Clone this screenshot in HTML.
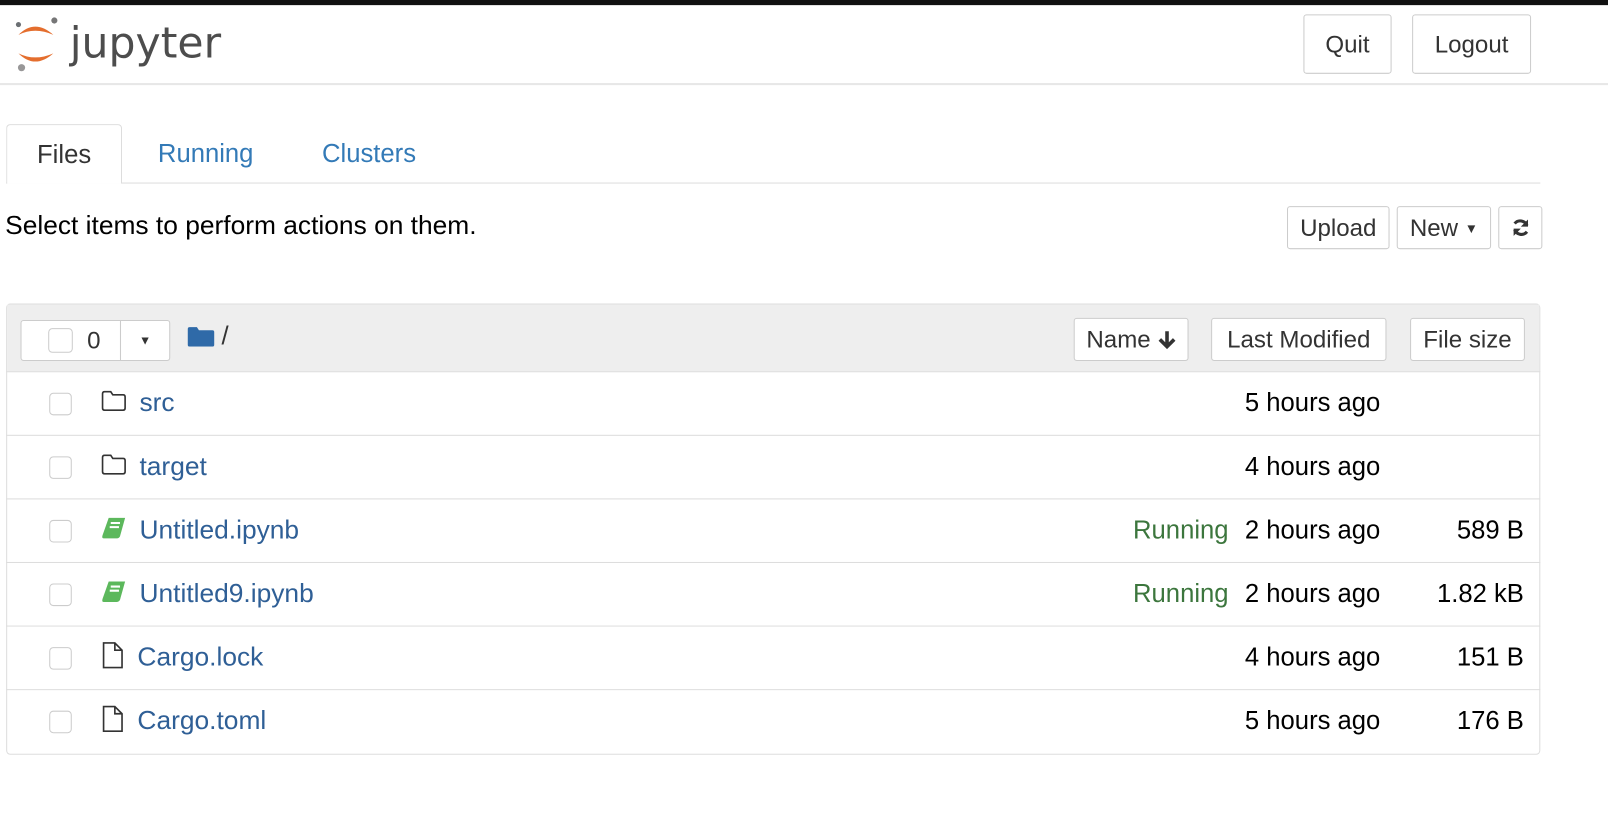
<!DOCTYPE html>
<html><head><style>
body{margin:0;width:1608px;height:830px;background:#fff;font-family:"Liberation Sans",Arial,sans-serif;position:relative;overflow:hidden;color:#000}
#w{position:absolute;left:0;top:0;width:1568px;height:810px;transform:scale(1.0255);transform-origin:0 0}
.a{position:absolute}
.btn{position:absolute;border:1px solid #ccc;border-radius:3px;background:#fff;font-size:23.5px;color:#333;display:flex;align-items:center;justify-content:center;box-sizing:border-box}
.row{position:absolute;left:6px;width:1496px;height:62px;border-top:1px solid #ddd;box-sizing:border-box}
.cb{position:absolute;left:42px;top:20px;width:22px;height:22px;border:1px solid #ccc;border-radius:4px;box-sizing:border-box;background:#fff}
.nm{position:absolute;left:130px;top:16px;font-size:25.7px;color:#2f5f96}
.ic{position:absolute;left:92px;top:17px}
.tm{position:absolute;right:156px;top:16px;font-size:25px;color:#000}
.sz{position:absolute;right:16px;top:16px;font-size:25px}
.run{position:absolute;right:304px;top:16px;font-size:25px;color:#3c763d}
</style></head><body><div id="w">
<div class="a" style="left:0;top:0;width:1608px;height:5px;background:#111"></div>
<svg class="a" style="left:12px;top:14px" width="50" height="56" viewBox="0 0 50 56">
<path d="M6 20 Q22 4 40 20 Q22 12 6 20Z" fill="#e46e2e"/>
<path d="M6 38 Q22 54 40 38 Q22 46 6 38Z" fill="#e46e2e"/>
<circle cx="6" cy="10" r="2.5" fill="#6b6f73"/><circle cx="41" cy="6" r="3" fill="#767677"/><circle cx="9" cy="52" r="3.5" fill="#989798"/>
</svg>
<div class="a" style="left:68px;top:17px;font-size:41.5px;color:#4d4d4d;font-family:'DejaVu Sans',sans-serif">jupyter</div>
<div class="btn" style="left:1271px;top:14px;width:86px;height:58px">Quit</div>
<div class="btn" style="left:1377px;top:14px;width:116px;height:58px">Logout</div>
<div class="a" style="left:0;top:81px;width:1608px;height:2px;background:#e7e7e7"></div>

<div class="a" style="left:6px;top:178px;width:1496px;height:1px;background:#ddd"></div>
<div class="a" style="left:6px;top:121px;width:113px;height:58px;border:1px solid #ddd;border-bottom:none;border-radius:4px 4px 0 0;background:#fff;box-sizing:border-box;font-size:25px;color:#333;text-align:center;line-height:58px">Files</div>
<div class="a" style="left:154px;top:136px;font-size:25px;color:#337ab7">Running</div>
<div class="a" style="left:314px;top:136px;font-size:25px;color:#337ab7">Clusters</div>

<div class="a" style="left:5px;top:206px;font-size:25.7px">Select items to perform actions on them.</div>
<div class="btn" style="left:1255px;top:201px;width:100px;height:42px">Upload</div>
<div class="btn" style="left:1362px;top:201px;width:92px;height:42px">New&nbsp;<span style="font-size:13px">▼</span></div>
<div class="btn" style="left:1461px;top:201px;width:43px;height:42px"><svg width="20" height="20" viewBox="0 0 20 20" fill="none" stroke="#333" stroke-width="3"><path d="M16 8A7 7 0 0 0 4 6"/><path d="M4 12a7 7 0 0 0 12 2"/><path d="M17 2v7h-7" fill="#333" stroke-width="0"/><path d="M3 18v-7h7" fill="#333" stroke-width="0"/></svg></div>

<div class="a" style="left:6px;top:296px;width:1496px;height:440px;border:1px solid #ddd;border-radius:4px;box-sizing:border-box"></div>
<div class="a" style="left:7px;top:297px;width:1494px;height:65px;background:#eee"></div>
<div class="btn" style="left:20px;top:312px;width:98px;height:40px;border-radius:3px 0 0 3px;justify-content:flex-start"><div style="width:22px;height:22px;border:1px solid #ccc;border-radius:4px;margin-left:26px;margin-right:14px"></div>0</div>
<div class="btn" style="left:117px;top:312px;width:49px;height:40px;border-radius:0 3px 3px 0"><span style="font-size:12px">▼</span></div>
<svg class="a" style="left:183px;top:318px" width="26" height="20" viewBox="0 0 26 20"><path d="M0 3Q0 1 2 1H9L11 4H24Q26 4 26 6V18Q26 20 24 20H2Q0 20 0 18Z" fill="#2f6aa8"/></svg>
<div class="a" style="left:216px;top:314px;font-size:25px;color:#333">/</div>
<div class="btn" style="left:1047px;top:310px;width:112px;height:42px">Name&nbsp;<svg width="18" height="20" viewBox="0 0 18 20"><path d="M9 2V17M2 10L9 17L16 10" fill="none" stroke="#333" stroke-width="3.5"/></svg></div>
<div class="btn" style="left:1181px;top:310px;width:171px;height:42px">Last Modified</div>
<div class="btn" style="left:1375px;top:310px;width:112px;height:42px">File size</div>

<div class="row" style="top:362px"><div class="cb"></div><svg class="ic" width="26" height="22" viewBox="0 0 26 22" fill="none" stroke="#333" stroke-width="1.6"><path d="M2 4Q2 2 4 2H10L12 5H22Q24 5 24 7V18Q24 20 22 20H4Q2 20 2 18Z"/></svg><div class="nm">src</div><div class="tm">5 hours ago</div></div>
<div class="row" style="top:424px"><div class="cb"></div><svg class="ic" width="26" height="22" viewBox="0 0 26 22" fill="none" stroke="#333" stroke-width="1.6"><path d="M2 4Q2 2 4 2H10L12 5H22Q24 5 24 7V18Q24 20 22 20H4Q2 20 2 18Z"/></svg><div class="nm">target</div><div class="tm">4 hours ago</div></div>
<div class="row" style="top:486px"><div class="cb"></div><svg class="ic" width="26" height="22" viewBox="0 0 26 22"><path d="M8 1H24L19 19Q18 21 16 21H3Q1 21 2 18Z" fill="#5cb85c"/><path d="M10 6H19M9 10H18" stroke="#fff" stroke-width="2"/></svg><div class="nm">Untitled.ipynb</div><div class="run">Running</div><div class="tm">2 hours ago</div><div class="sz">589 B</div></div>
<div class="row" style="top:548px"><div class="cb"></div><svg class="ic" width="26" height="22" viewBox="0 0 26 22"><path d="M8 1H24L19 19Q18 21 16 21H3Q1 21 2 18Z" fill="#5cb85c"/><path d="M10 6H19M9 10H18" stroke="#fff" stroke-width="2"/></svg><div class="nm">Untitled9.ipynb</div><div class="run">Running</div><div class="tm">2 hours ago</div><div class="sz">1.82 kB</div></div>
<div class="row" style="top:610px"><div class="cb"></div><svg class="ic" style="left:92px;top:14px" width="24" height="28" viewBox="0 0 24 28" fill="none" stroke="#333" stroke-width="1.6"><path d="M3 2H14L21 9V26H3Z M14 2V9H21"/></svg><div class="nm" style="left:128px">Cargo.lock</div><div class="tm">4 hours ago</div><div class="sz">151 B</div></div>
<div class="row" style="top:672px;height:63px"><div class="cb"></div><svg class="ic" style="left:92px;top:14px" width="24" height="28" viewBox="0 0 24 28" fill="none" stroke="#333" stroke-width="1.6"><path d="M3 2H14L21 9V26H3Z M14 2V9H21"/></svg><div class="nm" style="left:128px">Cargo.toml</div><div class="tm">5 hours ago</div><div class="sz">176 B</div></div>
</div></body></html>
